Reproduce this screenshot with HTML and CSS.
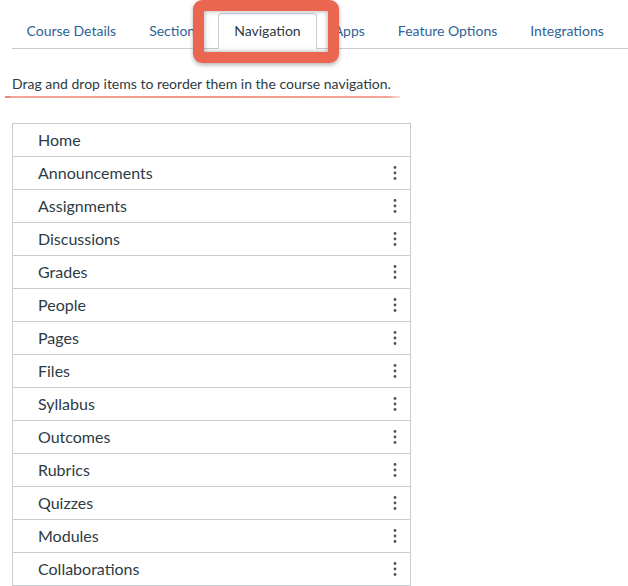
FILE: index.html
```html
<!DOCTYPE html>
<html>
<head>
<meta charset="utf-8">
<link rel="stylesheet" href="styles.css">
</head>
<body>
<div class="page">
  <nav class="tabs">
    <span class="tab first">Course Details</span>
    <span class="tab">Sections</span>
    <span class="tab active">Navigation</span>
    <span class="tab">Apps</span>
    <span class="tab">Feature Options</span>
    <span class="tab">Integrations</span>
    <div class="frame"></div>
  </nav>
  <p class="desc">Drag and drop items to reorder them in the course navigation.</p>
  <div class="underline"></div>
  <ul class="navlist">
    <li><span class="label">Home</span></li>
    <li><span class="label">Announcements</span><svg class="kebab" viewBox="0 0 4 14" width="4" height="14"><circle cx="2" cy="1.5" r="1.4"/><circle cx="2" cy="7" r="1.4"/><circle cx="2" cy="12.5" r="1.4"/></svg></li>
    <li><span class="label">Assignments</span><svg class="kebab" viewBox="0 0 4 14" width="4" height="14"><circle cx="2" cy="1.5" r="1.4"/><circle cx="2" cy="7" r="1.4"/><circle cx="2" cy="12.5" r="1.4"/></svg></li>
    <li><span class="label">Discussions</span><svg class="kebab" viewBox="0 0 4 14" width="4" height="14"><circle cx="2" cy="1.5" r="1.4"/><circle cx="2" cy="7" r="1.4"/><circle cx="2" cy="12.5" r="1.4"/></svg></li>
    <li><span class="label">Grades</span><svg class="kebab" viewBox="0 0 4 14" width="4" height="14"><circle cx="2" cy="1.5" r="1.4"/><circle cx="2" cy="7" r="1.4"/><circle cx="2" cy="12.5" r="1.4"/></svg></li>
    <li><span class="label">People</span><svg class="kebab" viewBox="0 0 4 14" width="4" height="14"><circle cx="2" cy="1.5" r="1.4"/><circle cx="2" cy="7" r="1.4"/><circle cx="2" cy="12.5" r="1.4"/></svg></li>
    <li><span class="label">Pages</span><svg class="kebab" viewBox="0 0 4 14" width="4" height="14"><circle cx="2" cy="1.5" r="1.4"/><circle cx="2" cy="7" r="1.4"/><circle cx="2" cy="12.5" r="1.4"/></svg></li>
    <li><span class="label">Files</span><svg class="kebab" viewBox="0 0 4 14" width="4" height="14"><circle cx="2" cy="1.5" r="1.4"/><circle cx="2" cy="7" r="1.4"/><circle cx="2" cy="12.5" r="1.4"/></svg></li>
    <li><span class="label">Syllabus</span><svg class="kebab" viewBox="0 0 4 14" width="4" height="14"><circle cx="2" cy="1.5" r="1.4"/><circle cx="2" cy="7" r="1.4"/><circle cx="2" cy="12.5" r="1.4"/></svg></li>
    <li><span class="label">Outcomes</span><svg class="kebab" viewBox="0 0 4 14" width="4" height="14"><circle cx="2" cy="1.5" r="1.4"/><circle cx="2" cy="7" r="1.4"/><circle cx="2" cy="12.5" r="1.4"/></svg></li>
    <li><span class="label">Rubrics</span><svg class="kebab" viewBox="0 0 4 14" width="4" height="14"><circle cx="2" cy="1.5" r="1.4"/><circle cx="2" cy="7" r="1.4"/><circle cx="2" cy="12.5" r="1.4"/></svg></li>
    <li><span class="label">Quizzes</span><svg class="kebab" viewBox="0 0 4 14" width="4" height="14"><circle cx="2" cy="1.5" r="1.4"/><circle cx="2" cy="7" r="1.4"/><circle cx="2" cy="12.5" r="1.4"/></svg></li>
    <li><span class="label">Modules</span><svg class="kebab" viewBox="0 0 4 14" width="4" height="14"><circle cx="2" cy="1.5" r="1.4"/><circle cx="2" cy="7" r="1.4"/><circle cx="2" cy="12.5" r="1.4"/></svg></li>
    <li><span class="label">Collaborations</span><svg class="kebab" viewBox="0 0 4 14" width="4" height="14"><circle cx="2" cy="1.5" r="1.4"/><circle cx="2" cy="7" r="1.4"/><circle cx="2" cy="12.5" r="1.4"/></svg></li>
  </ul>
</div>
</body>
</html>
```
FILE: styles.css
```css
html, body {
  margin: 0;
  padding: 0;
  background: #ffffff;
}
body {
  font-family: Lato, "Open Sans", sans-serif;
  color: #2d3b45;
  overflow: hidden;
}
.page {
  padding-left: 12px;
}
.tabs {
  position: relative;
  display: flex;
  align-items: flex-start;
  padding-top: 13px;
  border-bottom: 1px solid #c7cdd1;
}
.tab {
  box-sizing: border-box;
  height: 35px;
  line-height: 33px;
  padding: 0 15.5px;
  border: 1px solid transparent;
  border-bottom: 0;
  font-size: 14px;
  color: #2f6296;
  white-space: nowrap;
}
.tab.first {
  margin-left: -2px;
}
.tab.active {
  height: 36px;
  margin-bottom: -1px;
  background: #ffffff;
  border-color: #c7cdd1;
  border-radius: 4px 4px 0 0;
  color: #2d3b45;
}
.frame {
  position: absolute;
  left: 181px;
  top: 0;
  width: 146px;
  height: 63px;
  box-sizing: border-box;
  border: 11px solid #eb6651;
  border-radius: 9px;
  box-shadow: inset 0 0 5px rgba(0, 0, 0, 0.35), 0 2px 4px rgba(0, 0, 0, 0.3);
}
.desc {
  margin: 26px 0 0;
  font-size: 14px;
  line-height: 18px;
  color: #2d3b45;
}
.underline {
  margin: 3px 0 0 -7px;
  width: 395px;
  height: 2px;
  background: linear-gradient(to right, #e58a7a 0, #e58a7a 5px, #f3a698 6px, #f0988a 50%, #f3a698 97%, rgba(243, 166, 152, 0.4) 100%);
}
.navlist {
  list-style: none;
  margin: 25px 0 0;
  padding: 0;
  width: 399px;
  box-sizing: border-box;
  border: 1px solid #c7cdd1;
  border-bottom: 0;
}
.navlist li {
  display: flex;
  align-items: center;
  justify-content: space-between;
  height: 32px;
  border-bottom: 1px solid #c7cdd1;
  padding: 0 13px 0 25px;
  font-size: 16px;
  color: #2d3b45;
}
.label {
  margin-bottom: 2px;
}
.kebab {
  fill: #4a5560;
  display: block;
}
```
